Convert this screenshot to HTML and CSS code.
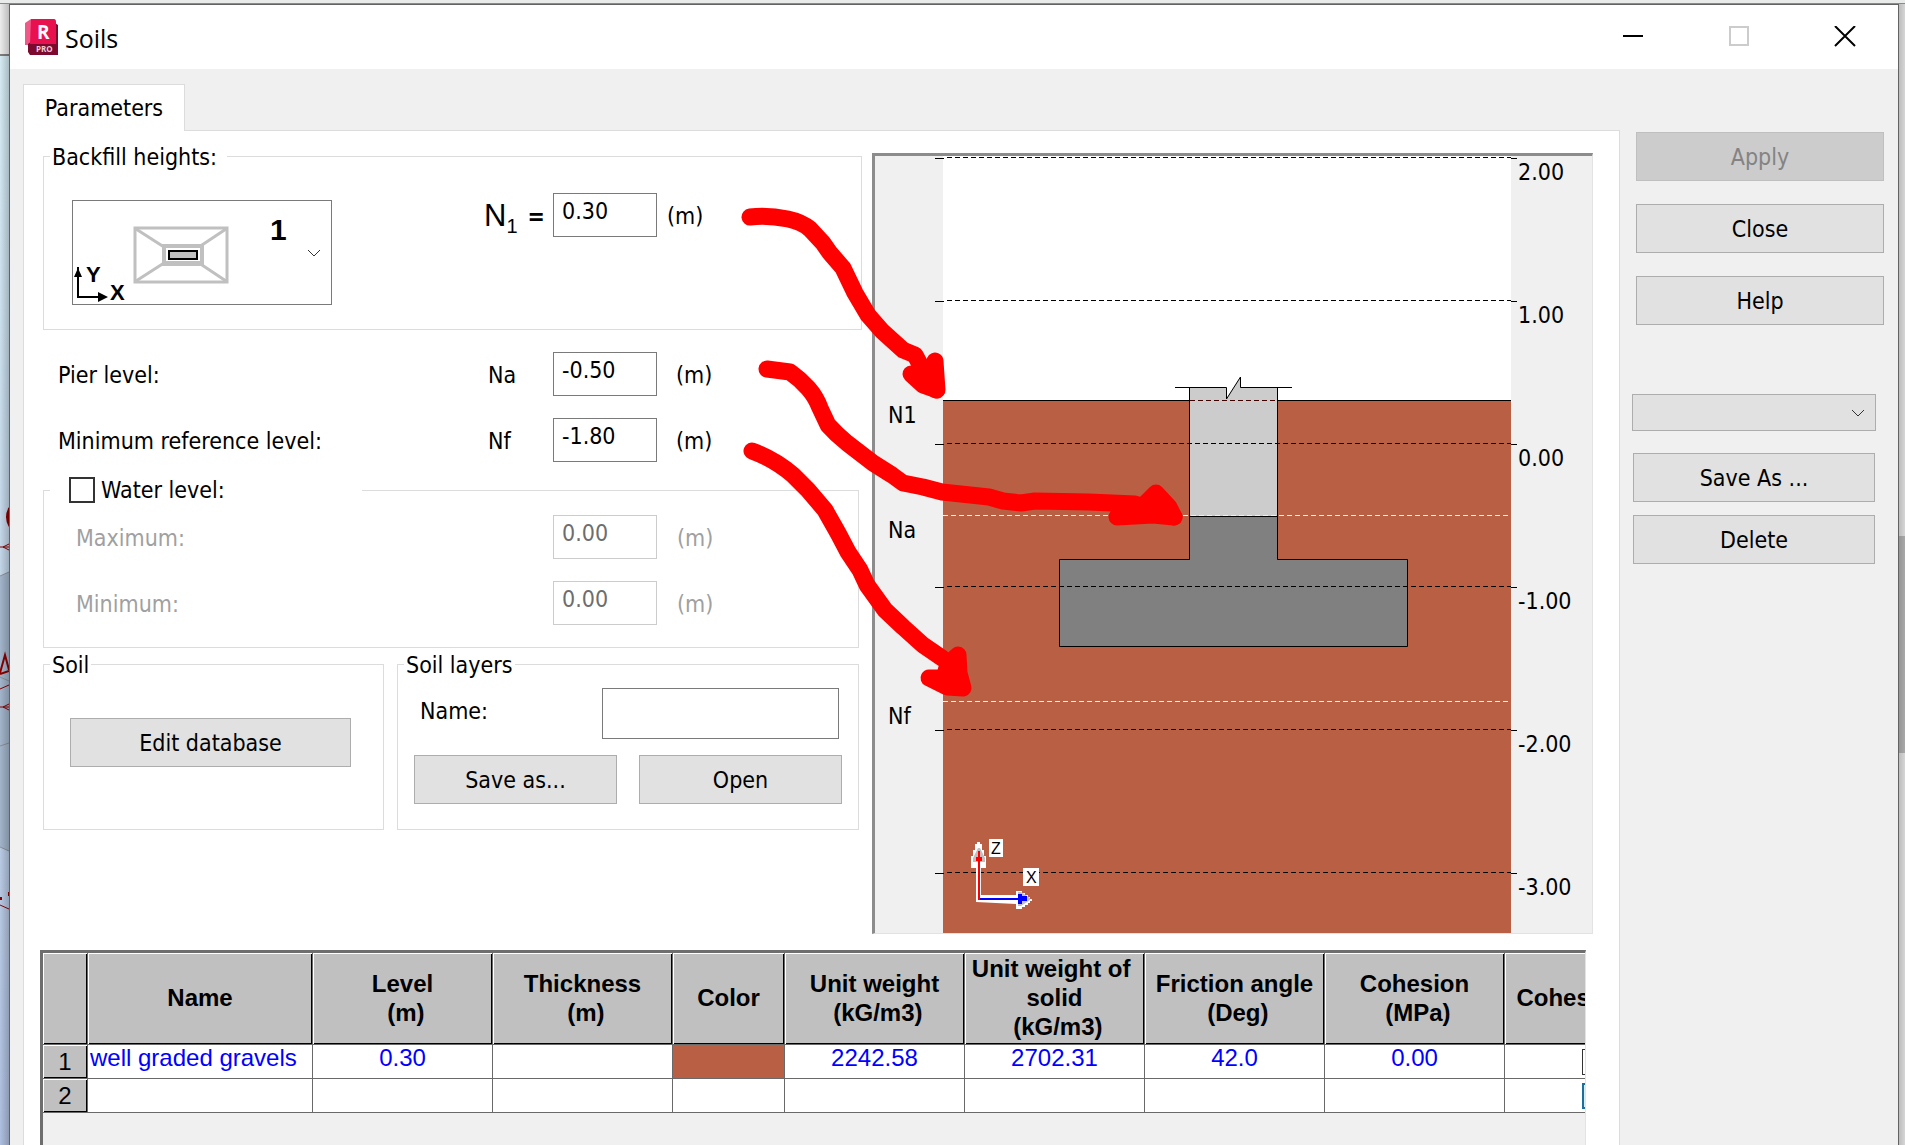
FILE: index.html
```html
<!DOCTYPE html>
<html lang="en">
<head>
<meta charset="utf-8">
<title>Soils</title>
<link rel="stylesheet" href="styles.css">
</head>
<body>
<div class="desktop">
  <div class="desktop-top"></div>
  <svg class="model-view" width="9" height="1141" viewBox="0 4 9 1141" preserveAspectRatio="xMinYMin slice" aria-hidden="true">
    <defs>
      <linearGradient id="sky" x1="0" y1="0" x2="0" y2="1">
        <stop offset="0" stop-color="#d5ebf3"/><stop offset="1" stop-color="#aebfdf"/>
      </linearGradient>
      <linearGradient id="shade" x1="0" y1="0" x2="1" y2="0">
        <stop offset="0" stop-color="#000" stop-opacity="0"/><stop offset="1" stop-color="#000" stop-opacity=".2"/>
      </linearGradient>
    </defs>
    <path fill="#ececec" d="M0 4h9v51H0z"/>
    <path fill="url(#sky)" d="M0 56h9v1089H0z"/>
    <path fill="#7f7f7f" d="M0 54h9v2H0z"/>
    <path fill="#a3b5cb" d="M0 576l9-4v279l-9-4z"/>
    <path fill="none" stroke="#8b9197" d="M0 576l9-4M0 677l9 4M0 746l9-3M0 847l9 4"/>
    <path fill="none" stroke="#8b0000" d="M0 547h9M3 547l6-3M3 547l6 3M0 689l9-4M0 707h9M3 707l6-3M3 707l6 3M0 905l9 4"/>
    <path fill="none" stroke="#8b0000" stroke-width="3" d="M10 508q-5 9 0 18"/>
    <path fill="none" stroke="#8b0000" stroke-width="2" d="M0 673l5-18 4 15M0 674l9-3"/>
    <path fill="#8b0000" d="M0 897h2v3H0zM8 892h1v4H8z"/>
    <path fill="url(#shade)" d="M0 4h9v1141H0z"/>
  </svg>

  <main class="window">
    <header class="titlebar">
      <svg class="app-icon" width="34" height="36" viewBox="0 0 34 36" aria-hidden="true">
        <path fill="#f0588a" d="M0 4l6-4v26H0z"/>
        <path fill="#7b0a2e" d="M30 4l3 2v30H5l-2-3v-8z"/>
        <path fill="#e8104f" d="M6 0h23q2 0 2 3v22H5z"/>
        <text x="12" y="20" class="icon-r">R</text>
        <text x="11" y="33" class="icon-pro">PRO</text>
      </svg>
      <h1>Soils</h1>
      <button class="caption" aria-label="Minimize"><svg width="22" height="22" viewBox="0 0 22 22"><path d="M1 10h20" stroke="#000" stroke-width="2"/></svg></button>
      <button class="caption" aria-label="Maximize" disabled><svg width="22" height="22" viewBox="0 0 22 22"><rect x="2" y="1" width="18" height="18" fill="none" stroke="#ccc" stroke-width="2"/></svg></button>
      <button class="caption" aria-label="Close window"><svg width="22" height="22" viewBox="0 0 22 22"><path d="M1 0l20 20M21 0L1 20" stroke="#000" stroke-width="2"/></svg></button>
    </header>

    <div class="client">
      <section class="tabs">
        <div role="tablist"><button class="tab" role="tab" aria-selected="true">Parameters</button></div>
        <div class="panel" role="tabpanel">
          <div class="upper">
            <form class="form">
              <fieldset class="backfill">
                <legend>Backfill heights:</legend>
                <div class="backfill-row">
                  <div class="shape-picker">
                    <select aria-label="Backfill shape"><option aria-label="Shape 1"></option></select>
                    <svg class="shape-art" width="258" height="103" viewBox="0 0 258 103" aria-hidden="true">
                      <g stroke="#c0c0c0" fill="none" stroke-width="3">
                        <rect x="62" y="27" width="92" height="54"/>
                        <path d="M63 28l28 18M153 28l-27 18M63 80l28-18M153 80l-27-18"/>
                      </g>
                      <path fill="#c0c0c0" d="M89 43h42v22H89z"/>
                      <rect x="95" y="49" width="30" height="9" fill="#c0c0c0" stroke="#fff" stroke-width="4"/>
                      <rect x="96" y="50" width="28" height="8" fill="#c0c0c0" stroke="#000" stroke-width="2"/>
                      <g fill="#000">
                        <path d="M4 66h2v29h21v2H4z"/>
                        <path d="M1 76l4-9 4 9zM25 91l10 5-10 5z"/>
                        <text x="13" y="81" class="axis-label">Y</text>
                        <text x="37" y="99" class="axis-label">X</text>
                        <text x="197" y="39" class="shape-number">1</text>
                      </g>
                      <path d="M235 49l6 6 6-6" fill="none" stroke="#333"/>
                    </svg>
                  </div>
                  <label class="n1-label" for="n1"><span class="n1">N<sub>1</sub></span><b>=</b></label>
                  <input id="n1" type="text" value="0.30">
                  <span class="unit-near">(m)</span>
                </div>
              </fieldset>

              <div class="levels">
                <label for="na">Pier level:</label><span>Na</span>
                <input id="na" type="text" value="-0.50"><span class="unit">(m)</span>
                <label for="nf">Minimum reference level:</label><span>Nf</span>
                <input id="nf" type="text" value="-1.80"><span class="unit">(m)</span>
              </div>

              <fieldset class="water">
                <legend><label><input type="checkbox">Water level:</label></legend>
                <div class="water-rows">
                  <label for="wmax">Maximum:</label><input id="wmax" type="text" value="0.00" disabled><span class="unit">(m)</span>
                  <label for="wmin">Minimum:</label><input id="wmin" type="text" value="0.00" disabled><span class="unit">(m)</span>
                </div>
              </fieldset>

              <div class="soil-groups">
                <fieldset class="soil">
                  <legend>Soil</legend>
                  <button type="button" class="btn">Edit database</button>
                </fieldset>
                <fieldset class="layers">
                  <legend>Soil layers</legend>
                  <div class="name-row"><label for="lname">Name:</label><input id="lname" type="text"></div>
                  <div class="layer-buttons"><button type="button" class="btn">Save as...</button><button type="button" class="btn">Open</button></div>
                </fieldset>
              </div>
            </form>

            <figure class="drawing">
              <svg viewBox="875 156 717 777" role="img" aria-label="Foundation cross-section with soil levels">
                <path fill="#fff" d="M943 156h568v245H943z"/>
                <path fill="#b96044" d="M943 401h568v532H943z"/>
                <path fill="#000" d="M943 400h568v1H943z"/>
                <path fill="#ccc" d="M1189 387h37v12l14-22v10h38v130h-89z"/>
                <path fill="none" stroke="#400000" stroke-dasharray="5 3" d="M1190 400.500h87"/>
                <path fill="none" stroke="#000" d="M1189.500 387v172.500M1277.500 387v172.500M1175 387.500h51.500v11.500l14-22v10.500h51.500"/>
                <path fill="#808080" stroke="#000" d="M1189.500 516.500h88v43h130v87h-348v-87h130z"/>
                <g fill="none" stroke="#000" stroke-dasharray="5 3">
                  <path d="M947 157.500h564M947 300.500h564M947 443.500h564M947 586.500h564M947 729.500h564M947 872.500h564"/>
                </g>
                <path fill="none" stroke="#000" d="M935 158.500h9M935 301.500h9M935 444.500h9M935 587.500h9M935 730.500h9M935 873.500h9M1511 158.500h6M1511 301.500h6M1511 444.500h6M1511 587.500h6M1511 730.500h6M1511 873.500h6"/>
                <path fill="none" stroke="#ffff80" stroke-dasharray="5 3" d="M943 515.500h568M943 701.500h568"/>
                <g class="plot-text">
                  <text x="888" y="423">N1</text><text x="888" y="538">Na</text><text x="888" y="724">Nf</text>
                  <text x="1518" y="180">2.00</text><text x="1518" y="323">1.00</text><text x="1518" y="466">0.00</text>
                  <text x="1518" y="609">-1.00</text><text x="1518" y="752">-2.00</text><text x="1518" y="895">-3.00</text>
                </g>
                <path fill="#fff" d="M976 902v-34h-5v-12h2v-6h2v-6h2v-2h3v2h2v6h2v6h2v12h-5v27h35v-4h6v2h3v2h3v2h2v2h2v2h-2v2h-2v2h-3v2h-3v2h-6v-5z"/>
                <path fill="#c0c0c0" d="M973 862v-4l5-10h2l5 10v4zM1018 892h3l9 6v2l-9 6h-3z"/>
                <path fill="#f00" d="M976 861v-4h2v-6h2v6h2v4h-2v39h-2v-39z"/>
                <path fill="#00f" d="M980 898h38v-4h4v2h5v5h-5v3h-4v-4h-38z"/>
                <path fill="#fff" d="M989 839h14v18h-14zM1023 868h16v18h-16z"/>
                <text x="991" y="854" class="axis-tag">Z</text><text x="1026" y="883" class="axis-tag">X</text>
              </svg>
            </figure>

            <svg class="markup" width="1200" height="600" viewBox="24 131 1200 600" aria-hidden="true">
              <g fill="none" stroke="#f00" stroke-width="17" stroke-linecap="round" stroke-linejoin="round">
                <path d="M750 217Q768 215 788 219Q802 222 810 229L823 243 830 253 843 268 855 293 868 315 882 331 903 350 915 355 923 370 936 390"/>
                <path fill="#f00" d="M935 361l2 29-14-5-12-11q8 0 16 6z"/>
                <path d="M767 369l23 3q10 7 18 16 8 9 12 20l8 17q8 9 19 18l26 20 19 12 11 8 20 4 19 5 47 5 14 4 18 2 14-2 54 1 46 2 39 13"/>
                <path fill="#f00" d="M1156 493l13 14 5 10-21-2-36 2 20-5z"/>
                <path d="M752 451q22 8 41 24l15 15 17 20 13 23 10 19 12 18 7 15 18 25 18 17 20 18 19 13"/>
                <path fill="#f00" d="M958 655l1 18 4 15-16-1-18-9 15 0 4-14z"/>
              </g>
            </svg>
          </div>

          <div class="grid-view">
            <table>
              <colgroup><col class="c-num"><col class="c-name"><col class="c-std"><col class="c-std"><col class="c-color"><col class="c-std"><col class="c-std"><col class="c-std"><col class="c-std"><col class="c-std"></colgroup>
              <thead>
                <tr><th></th><th>Name</th><th>Level<br>&nbsp;(m)</th><th>Thickness<br>&nbsp;(m)</th><th>Color</th><th>Unit weight<br>&nbsp;(kG/m3)</th><th>Unit weight of&nbsp;<br>solid<br>&nbsp;(kG/m3)</th><th>Friction angle<br>&nbsp;(Deg)</th><th>Cohesion<br>&nbsp;(MPa)</th><th>Cohesionless</th></tr>
              </thead>
              <tbody>
                <tr><th>1</th><td class="left">well graded gravels</td><td>0.30</td><td></td><td class="swatch"></td><td>2242.58</td><td>2702.31</td><td>42.0</td><td>0.00</td><td><input class="cell-check" type="checkbox" aria-label="Cohesionless, layer 1"></td></tr>
                <tr><th>2</th><td></td><td></td><td></td><td></td><td></td><td></td><td></td><td></td><td><input class="cell-check is-hot" type="checkbox" aria-label="Cohesionless, layer 2"></td></tr>
              </tbody>
            </table>
          </div>
        </div>
      </section>

      <aside class="actions">
        <button class="btn" disabled>Apply</button>
        <button class="btn">Close</button>
        <button class="btn">Help</button>
        <div class="presets">
          <div class="preset-picker">
            <select aria-label="Saved settings"><option></option></select>
            <svg width="14" height="8" viewBox="0 0 14 8" aria-hidden="true"><path d="M1 1l6 6 6-6" fill="none" stroke="#333"/></svg>
          </div>
          <button class="btn">Save As ...</button>
          <button class="btn">Delete</button>
        </div>
      </aside>
    </div>
  </main>
  <div class="page-scroll"><div class="thumb"></div></div>
</div>
</body>
</html>
```
FILE: styles.css
```css
:root {
  --ui: "DejaVu Sans Condensed", "DejaVu Sans", Tahoma, sans-serif;
  --line: #dcdcdc;
  --soil: #b96044;
}

* { box-sizing: border-box; }

body {
  margin: 0;
  font-family: var(--ui);
  font-stretch: condensed;
  font-size: 23px;
  line-height: 28px;
  color: #000;
}

button, input, select { font: inherit; color: inherit; border-radius: 0; margin: 0; }
svg { display: block; }

.desktop {
  display: grid;
  grid-template: 4px minmax(0, 1fr) / 9px minmax(0, 1fr) 6px;
  height: 100vh;
  overflow: hidden;
}
.desktop-top { grid-column: 1 / -1; background: #e9ebeb; border-bottom: 1px solid #8a8a8a; }
.model-view { height: 100%; }
.page-scroll {
  display: grid;
  grid-template-rows: 532fr 217fr 392fr;
  background: linear-gradient(90deg, #bdbdbd, #d6d6d6);
}
.thumb { grid-row: 2; background: linear-gradient(90deg, #959595, #a9a9a9); }

.window {
  display: flex;
  flex-direction: column;
  min-height: 0;
  background: #f0f0f0;
  border: 1px solid #636363;
  border-bottom: 0;
}

.titlebar { display: flex; align-items: center; height: 64px; padding-left: 15px; background: #fff; flex: none; }
.titlebar h1 { flex: 1; margin: 0; padding: 2px 0 0 6px; font: 400 25px/32px "Open Sans", "Noto Sans", sans-serif; }
.icon-r { font: 700 19px "Open Sans", sans-serif; fill: #fff; }
.icon-pro { font: 700 8px "Open Sans", sans-serif; fill: #f3c6d4; }
.caption {
  width: 106px;
  height: 64px;
  display: grid;
  place-items: center;
  border: 0;
  background: none;
}

.client { display: flex; flex: 1; min-height: 0; padding: 15px 0 0 13px; }
.tabs { flex: 1; min-width: 0; display: flex; flex-direction: column; }
.tab {
  position: relative;
  display: block;
  width: 162px;
  height: 47px;
  margin-bottom: -1px;
  padding: 0;
  border: 1px solid var(--line);
  border-bottom: 0;
  background: #fff;
}
.panel {
  display: flex;
  flex-direction: column;
  flex: 1;
  min-height: 0;
  background: #fff;
  border: 1px solid var(--line);
  border-bottom: 0;
}

.upper {
  position: relative;
  display: grid;
  grid-template-columns: 819px minmax(0, 1fr);
  align-items: start;
  column-gap: 10px;
  padding: 9px 26px 16px 19px;
}

fieldset { margin: 0; padding: 0; border: 1px solid var(--line); min-width: 0; }
legend { padding: 3px 10px 1px 2px; }

input[type="text"] {
  height: 44px;
  width: 100%;
  min-width: 0;
  padding: 0 8px 8px;
  border: 1px solid #7a7a7a;
  background: #fff;
}
input[type="text"]:disabled { color: #6d6d6d; border-color: #ccc; }
input[type="checkbox"] { appearance: none; flex: none; width: 26px; height: 26px; border: 2px solid #333; background: #fff; }

.backfill { padding: 21px 28px 24px; }
.backfill legend { margin-left: -22px; }
.backfill-row { display: grid; grid-template-columns: 412px 69px 104px auto; align-items: start; }
.shape-picker { position: relative; width: 260px; height: 105px; margin-top: 7px; }
.shape-picker select { appearance: none; width: 100%; height: 100%; border: 1px solid #7a7a7a; background: #fff; }
.shape-art { position: absolute; inset: 1px; pointer-events: none; }
.axis-label { font: 700 22px "Liberation Sans", sans-serif; }
.shape-number { font: 700 30px "Liberation Sans", sans-serif; }
.n1-label { display: flex; align-items: center; gap: 10px; padding-top: 6px; }
.n1 { font: 31px/34px "Liberation Sans", sans-serif; }
.n1 sub { font-size: 20px; line-height: 0; }
.unit-near { padding: 9px 0 0 10px; }

.levels {
  display: grid;
  grid-template-columns: 430px 64px 104px auto;
  align-items: center;
  row-gap: 22px;
  padding: 22px 0 12px 15px;
}
.levels label, .levels span, .water-rows label, .unit { padding-top: 2px; }
.levels input[type="text"] { margin-left: 1px; }
.levels .unit, .water-rows .unit { padding-left: 20px; }

.water, .soil-groups { margin-right: 3px; }
.water { padding: 9px 0 22px 32px; }
.water legend { margin-left: -26px; padding: 0; width: 312px; height: 32px; }
.water legend label { display: flex; align-items: center; gap: 6px; height: 32px; padding-left: 19px; line-height: 32px; }
.water-rows { display: grid; grid-template-columns: 477px 104px auto; align-items: center; row-gap: 22px; color: #a0a0a0; }

.soil-groups { display: grid; grid-template-columns: 341px minmax(0, 1fr); column-gap: 13px; }
.soil-groups legend { padding-right: 2px; }
.soil { padding: 38px 32px 0 26px; }
.soil legend { margin-left: -20px; }
.soil .btn { width: 100%; }
.layers { padding: 8px 16px 25px; }
.layers legend { margin-left: -10px; }
.name-row { display: grid; grid-template-columns: 188px minmax(0, 1fr); padding-right: 3px; }
.name-row label { padding: 9px 0 0 6px; }
.name-row input[type="text"] { height: 51px; }
.layer-buttons { display: grid; grid-template-columns: 1fr 1fr; gap: 22px; margin-top: 16px; }

.btn { height: 49px; padding: 1px 0 0; border: 1px solid #adadad; background: #e1e1e1; }
.btn:disabled { background: #ccc; border-color: #bfbfbf; color: #838383; }

.drawing {
  margin: 13px 0 0;
  background: #f0f0f0;
  border: 1px solid #e3e3e3;
  border-top: 3px solid #8c8c8c;
  border-left: 3px solid #8c8c8c;
}
.drawing svg { width: 100%; height: auto; }
.plot-text { font: 23px var(--ui); font-stretch: condensed; }
.axis-tag { font: 16px "Liberation Sans", sans-serif; }
.markup { position: absolute; left: 0; top: 0; pointer-events: none; }

.grid-view {
  flex: 1;
  min-height: 0;
  margin: 0 33px 0 16px;
  overflow: hidden;
  background: #f0f0f0;
  border: 3px solid #6e6e6e;
  border-right: 1px solid #e3e3e3;
  border-bottom: 0;
}
table { width: 1642px; table-layout: fixed; border-spacing: 0; font: 24px/29px "Liberation Sans", sans-serif; }
.c-num { width: 45px; }
.c-name { width: 225px; }
.c-std { width: 180px; }
.c-color { width: 112px; }
th, td { padding: 0; border-right: 1px solid #696969; border-bottom: 1px solid #696969; text-align: center; }
th { background: #c0c0c0; box-shadow: inset 1px 1px #fff, inset -1px -1px #000; }
thead th { height: 92px; padding-bottom: 2px; vertical-align: middle; }
tbody th { font-weight: 400; }
tbody tr { height: 34px; }
td { background: #fff; color: #00f; vertical-align: top; line-height: 26px; }
td.left { text-align: left; padding-left: 2px; }
td.swatch { background: var(--soil); }
input.cell-check { display: block; margin: 4px auto 0; border: 1px solid #333; }
input.cell-check.is-hot { border: 2px solid #1b6f9c; background: #d9ecf7; }

.actions { display: flex; flex-direction: column; width: 278px; padding: 48px 14px 0 16px; gap: 23px; }
.presets { display: flex; flex-direction: column; margin: 46px 9px 0 -3px; gap: 13px; }
.preset-picker { position: relative; height: 37px; margin: 0 -1px 9px; }
.preset-picker select { appearance: none; width: 100%; height: 100%; border: 1px solid #adadad; background: #e1e1e1; }
.preset-picker svg { position: absolute; right: 11px; top: 15px; pointer-events: none; }
```
